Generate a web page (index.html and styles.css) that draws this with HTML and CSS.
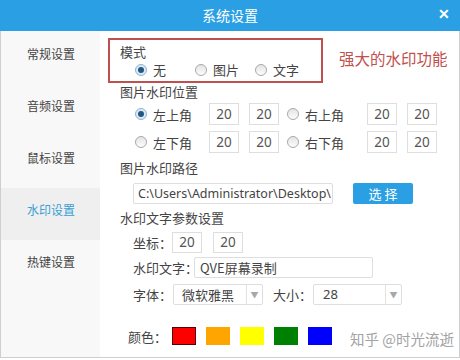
FILE: index.html
```html
<!DOCTYPE html>
<html>
  <head>
    <meta charset="utf-8">
    <title>系统设置</title>
    <link rel="stylesheet" href="styles.css">
  </head>
  <body>
    <div class="win">
      <div class="titlebar">
        <span class="title">系统设置</span>
        <span class="close">✕</span>
      </div>

      <div class="main">
        <ul class="side">
          <li>常规设置</li>
          <li>音频设置</li>
          <li>鼠标设置</li>
          <li class="active">水印设置</li>
          <li>热键设置</li>
        </ul>

        <div class="content">
          <div class="mode-row">
            <div class="mode-box">
              <div class="mode-title">模式</div>
              <div class="mode-opts">
                <span class="opt"><i class="radio on"></i>无</span>
                <span class="opt"><i class="radio"></i>图片</span>
                <span class="opt"><i class="radio"></i>文字</span>
              </div>
            </div>
            <div class="hint">强大的水印功能</div>
          </div>

          <div class="label first">图片水印位置</div>
          <div class="pos">
            <div class="pos-row">
              <span class="corner"><i class="radio on"></i>左上角</span>
              <span class="num">20</span><span class="num">20</span>
              <span class="corner right"><i class="radio"></i>右上角</span>
              <span class="num">20</span><span class="num">20</span>
            </div>
            <div class="pos-row">
              <span class="corner"><i class="radio"></i>左下角</span>
              <span class="num">20</span><span class="num">20</span>
              <span class="corner right"><i class="radio"></i>右下角</span>
              <span class="num">20</span><span class="num">20</span>
            </div>
          </div>

          <div class="label path-label">图片水印路径</div>
          <div class="path-row">
            <span class="field path">C:\Users\Administrator\Desktop\</span>
            <span class="btn">选 择</span>
          </div>

          <div class="label text-label">水印文字参数设置</div>
          <div class="row coord">
            <span class="key k-coord">坐标：</span>
            <span class="num">20</span><span class="num">20</span>
          </div>
          <div class="row text-row">
            <span class="key k-text">水印文字：</span>
            <span class="field wm-text">QVE屏幕录制</span>
          </div>
          <div class="row font-row">
            <span class="key k-font">字体：</span>
            <span class="select font-sel"><span class="val">微软雅黑</span><span class="arrow">▼</span></span>
            <span class="key k-size">大小：</span>
            <span class="select size-sel"><span class="val">28</span><span class="arrow">▼</span></span>
          </div>
          <div class="row color-row">
            <span class="key k-color">颜色：</span>
            <span class="swatch red"></span>
            <span class="swatch orange"></span>
            <span class="swatch yellow"></span>
            <span class="swatch green"></span>
            <span class="swatch blue"></span>
          </div>
        </div>
      </div>

      <div class="watermark">知乎 @时光流逝</div>
    </div>
  </body>
</html>
```

FILE: styles.css
```css
body { margin: 0; background: #fff; font-family: "Noto Sans CJK SC", "Noto Sans", sans-serif; color: #444; }
.win { position: relative; width: 460px; height: 358px; }
.titlebar { height: 31px; background: #2a9fe3; color: #fff; display: flex; align-items: center; justify-content: center; position: relative; }
.title { font-size: 14px; line-height: 31px; }
.close { position: absolute; right: 10px; top: 5px; font-size: 14px; font-weight: bold; line-height: 16px; }

.main { display: flex; height: 327px; border: 1px solid #cfcfcf; border-top: none; box-sizing: border-box; }
.side { list-style: none; margin: 0; padding: 1px 0 0; width: 99px; background: #f8f8f8; }
.side li { height: 52px; box-sizing: border-box; padding: 13px 0 0 26px; font-size: 12px; line-height: 18px; color: #444; }
.side li.active { background: #efefef; color: #3a9fd6; }

.content { flex: 1; padding: 7px 0 0 8px; font-size: 13px; }

.mode-row { display: flex; align-items: flex-start; }
.mode-box { width: 215px; height: 45px; box-sizing: border-box; border: 2px solid #c0504d; padding: 3px 0 0 10px; }
.mode-title { line-height: 18px; }
.mode-opts { display: flex; padding-left: 15px; line-height: 18px; }
.opt { width: 60px; display: flex; align-items: center; }
.hint { margin: 10px 0 0 16px; color: #c0504d; font-size: 15.5px; line-height: 20px; }

.radio { display: inline-block; width: 10px; height: 10px; border: 1px solid #a9a9a9; border-radius: 50%; background: linear-gradient(#e4e4e4, #fdfdfd); margin-right: 6px; position: relative; }
.radio.on { border-color: #8fb3d4; background: #dce9f5; }
.radio.on::after { content: ""; position: absolute; left: 2px; top: 2px; width: 6px; height: 6px; border-radius: 50%; background: #24577f; }

.label { padding-left: 12px; line-height: 16px; }
.label.first { margin-top: 1px; }
.pos { margin-top: 3px; padding-left: 27px; display: flex; flex-direction: column; gap: 6px; }
.pos-row { display: flex; align-items: center; height: 22px; }
.corner { width: 74px; display: flex; align-items: center; }
.corner.right { width: 80px; margin-left: 8px; }
.num { width: 30px; height: 22px; box-sizing: border-box; border: 1px solid #dedede; background: #fff; text-align: center; font-family: "Noto Sans", sans-serif; font-size: 13.5px; line-height: 20px; color: #555; }
.num + .num { margin-left: 10px; }

.path-label { margin-top: 7px; }
.path-row { margin-top: 7px; padding-left: 25px; display: flex; height: 21px; }
.field { box-sizing: border-box; border: 1px solid #dedede; border-radius: 2px; height: 21px; line-height: 19px; padding-left: 4px; white-space: nowrap; overflow: hidden; }
.path { width: 200px; font-family: "Noto Sans", sans-serif; font-size: 12.5px; }
.btn { margin-left: 20px; width: 60px; height: 21px; background: #2a9fe3; color: #fff; border-radius: 2px; text-align: center; font-size: 13px; line-height: 21px; }

.text-label { margin-top: 6px; }
.row { display: flex; align-items: center; padding-left: 25px; height: 21px; }
.coord { margin-top: 6px; }
.coord .num { height: 21px; line-height: 19px; }
.coord .num + .num { margin-left: 11px; }
.key { white-space: nowrap; }
.k-coord { width: 39px; }
.text-row { margin-top: 4px; }
.k-text { width: 61px; }
.wm-text { width: 179px; padding-left: 5px; }
.font-row { margin-top: 6px; }
.k-font { width: 40px; }
.select { display: flex; height: 21px; box-sizing: border-box; border: 1px solid #dedede; border-radius: 2px; }
.select .val { flex: 1; padding-left: 8px; line-height: 19px; }
.select .arrow { width: 15px; border-left: 1px solid #e2e2e2; color: #a8a8a8; font-size: 8px; line-height: 19px; text-align: center; }
.font-sel { width: 90px; }
.k-size { margin-left: 10px; width: 40px; }
.size-sel { width: 89px; }
.size-sel .val { padding-left: 9px; font-family: "Noto Sans", sans-serif; }
.color-row { margin-top: 22px; height: 18px; padding-left: 20px; }
.k-color { width: 44px; }
.swatch { width: 24px; height: 18px; box-sizing: border-box; margin-right: 10px; }
.red { background: #ff0000; border: 1px solid #5a0000; }
.orange { background: #ffa500; }
.yellow { background: #ffff00; }
.green { background: #008000; }
.blue { background: #0000ff; }

.watermark { position: absolute; left: 350px; top: 329px; font-size: 14.5px; line-height: 20px; color: #a3a3a3; }
```
